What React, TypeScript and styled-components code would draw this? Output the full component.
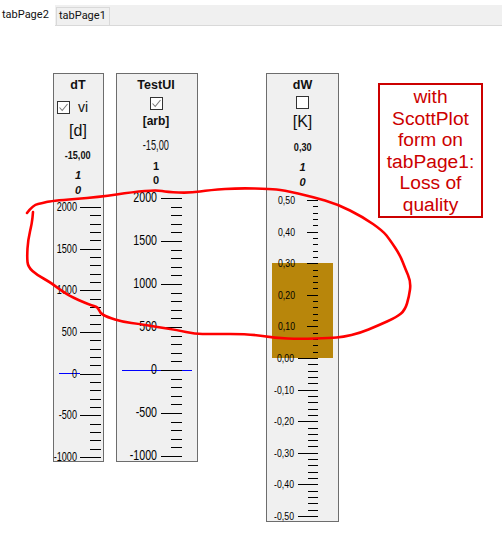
import React from 'react'
import styled, { createGlobalStyle } from 'styled-components'

const GlobalStyle = createGlobalStyle`
  html, body {
    margin: 0;
    padding: 0;
    background: #ffffff;
    font-family: "Liberation Sans", Arial, sans-serif;
  }
`

const Page = styled.div`
  position: relative;
  width: 502px;
  height: 539px;
  overflow: hidden;
`

const TabStrip = styled.div`
  display: flex;
  align-items: flex-end;
  padding-top: 5px;
  background: linear-gradient(#ffffff 5px, #f0f0f0 5px);
  height: 20px;
  border-bottom: 1px solid #d9d9d9;
`

const Tab = styled.div<{ $active?: boolean }>`
  box-sizing: border-box;
  height: ${p => (p.$active ? '21px' : '18px')};
  width: ${p => (p.$active ? '55px' : '54px')};
  margin-left: ${p => (p.$active ? '0' : '1px')};
  margin-bottom: ${p => (p.$active ? '-1px' : '0')};
  padding-left: 2px;
  background: ${p => (p.$active ? '#ffffff' : '#f0f0f0')};
  border: ${p => (p.$active ? 'none' : '1px solid #d9d9d9')};
  border-bottom: none;
  font-family: Roboto, "Liberation Sans", sans-serif;
  font-size: 11px;
  line-height: ${p => (p.$active ? '19px' : '16px')};
  color: #111111;
`

const Main = styled.div`
  display: flex;
  align-items: flex-start;
  padding: 47px 0 0 53px;
`

const Panel = styled.div<{ $width: number; $height: number; $gap?: number; $nudge?: number }>`
  box-sizing: border-box;
  width: ${p => p.$width}px;
  height: ${p => p.$height}px;
  margin-left: ${p => p.$gap ?? 0}px;
  padding-right: ${p => p.$nudge ?? 0}px;
  display: flex;
  flex-direction: column;
  background: #f0f0f0;
  border: 1px solid #6d6d6d;
`

const Row = styled.div<{ $h: number }>`
  height: ${p => p.$h}px;
  flex: none;
  display: flex;
  align-items: center;
  justify-content: center;
  color: #111111;
`

const Title = styled(Row)`
  font-size: 12.5px;
  font-weight: 700;
`

const Unit = styled(Row)`
  font-size: 16px;
`

const BoldUnit = styled(Row)`
  font-size: 12px;
  font-weight: 700;
`

const Value = styled(Row)`
  font-size: 11px;
  font-weight: 700;
`

const ThinValue = styled(Row)`
  font-size: 14px;
`

// the original labels are a tall, condensed face
const Squeezed = styled.span<{ $x: number }>`
  display: block;
  transform: scaleX(${p => p.$x});
`

const Digit = styled(Row)<{ $italic?: boolean }>`
  font-size: 11px;
  font-weight: 700;
  font-style: ${p => (p.$italic ? 'italic' : 'normal')};
`

const CheckRow = styled(Row)`
  justify-content: flex-start;
  padding-left: 3px;
  gap: 8px;
  font-size: 14px;
`

const Box = styled.span`
  box-sizing: border-box;
  width: 13px;
  height: 13px;
  display: block;
  background: #ffffff;
  border: 1px solid #333333;
`

const Ruler = styled.svg`
  display: block;
  flex: none;
  overflow: visible;
`

const Note = styled.div`
  box-sizing: border-box;
  width: 105px;
  height: 135px;
  margin: 10px 0 0 39px;
  padding-top: 1px;
  border: 2px solid #cc0000;
  color: #cc0000;
  background: #ffffff;
  font-size: 19.2px;
  line-height: 21.5px;
  text-align: center;
`

const Scribble = styled.svg`
  position: absolute;
  left: 0;
  top: 0;
  pointer-events: none;
`

const Check = ({ checked }: { checked?: boolean }) => (
  <Box>
    {checked && (
      <svg width="11" height="11" viewBox="0 0 11 11" style={{ display: 'block' }}>
        <polyline points="1.5,5.5 4.2,8.5 9.5,2" fill="none" stroke="#7a7a7a" strokeWidth="1.1" />
      </svg>
    )}
  </Box>
)

type Geometry = { major: number; minor: number; end: number; label: number }

type ScaleProps = {
  box: [number, number, number, number]
  first: number
  step: number
  labels: string[]
  geo: Geometry
  upper?: Geometry
  fontSize: number
  children?: React.ReactNode
  over?: React.ReactNode
}

// ticks and labels are given in page pixels, viewBox maps them into the panel
const Scale = ({ box, first, step, labels, geo, upper, fontSize, children, over }: ScaleProps) => {
  const zeroIndex = labels.findIndex(l => /^0(,00)?$/.test(l))
  const ticks: React.ReactNode[] = []
  const count = (labels.length - 1) * 5
  for (let i = 0; i <= count; i++) {
    const y = Math.round(first + (i * step) / 5) + 0.5
    const isMajor = i % 5 === 0
    const g = upper && i < zeroIndex * 5 ? upper : geo
    ticks.push(
      <line
        key={i}
        x1={isMajor ? g.major : g.minor}
        x2={g.end}
        y1={y}
        y2={y}
        stroke="#000000"
        strokeWidth="1"
      />
    )
  }
  return (
    <Ruler width={box[2]} height={box[3]} viewBox={box.join(' ')}>
      {children}
      <g shapeRendering="crispEdges">{ticks}</g>
      {over}
      <g fontSize={fontSize} fill="#000000" textAnchor="end">
        {labels.map((l, i) => {
          const g = upper && i < zeroIndex ? upper : geo
          const y = Math.round(first + i * step) + 4
          return (
            <text key={l} transform={`translate(${g.label} ${y}) scale(0.76 1)`}>
              {l}
            </text>
          )
        })}
      </g>
    </Ruler>
  )
}

const Blue = ({ x1, x2, y }: { x1: number; x2: number; y: number }) => (
  <line x1={x1} x2={x2} y1={y} y2={y} stroke="#0000ff" strokeWidth="1" shapeRendering="crispEdges" />
)

const thousands = ['2000', '1500', '1000', '500', '0', '-500', '-1000']
const fractions = [
  '0,50', '0,40', '0,30', '0,20', '0,10', '0,00',
  '-0,10', '-0,20', '-0,30', '-0,40', '-0,50',
]

const points = [
  [27, 213], [33, 205], [43, 203], [50, 201], [100, 197], [133, 192], [157, 190], [167, 192],
  [190, 193], [210, 190], [240, 188], [270, 189], [283, 190], [313, 197], [337, 204], [363, 217],
  [383, 231], [390, 240], [400, 255], [405, 268], [411, 282], [409, 297], [405, 310], [397, 317],
  [377, 326], [360, 333], [343, 337], [330, 338], [300, 339], [275, 338], [250, 334], [210, 334],
  [195, 334], [177, 330], [157, 327], [140, 324], [123, 322], [107, 317], [100, 313], [98, 307],
  [90, 305], [67, 295], [50, 282], [37, 275], [28, 267], [27, 257], [28, 240], [32, 223], [33, 212],
]

// hand drawn line: run a quadratic through the midpoints so it has no corners
const scribble = points.reduce((d, [x, y], i) => {
  if (i === 0) return `M${x} ${y}`
  if (i === points.length - 1) return `${d} L${x} ${y}`
  const [nx, ny] = points[i + 1]
  return `${d} Q${x} ${y} ${(x + nx) / 2} ${(y + ny) / 2}`
}, '')

export default function App() {
  return (
    <Page>
      <GlobalStyle />
      <TabStrip>
        <Tab $active>tabPage2</Tab>
        <Tab>tabPage1</Tab>
      </TabStrip>
      <Main>
        <Panel $width={51} $height={389} $nudge={1}>
          <Title $h={22}>dT</Title>
          <CheckRow $h={22}>
            <Check checked />
            <span>vi</span>
          </CheckRow>
          <Unit $h={26}>[d]</Unit>
          <Value $h={22}>
            <Squeezed $x={0.83}>-15,00</Squeezed>
          </Value>
          <Digit $h={18} $italic>1</Digit>
          <Digit $h={12} $italic>0</Digit>
          <Scale
            box={[54, 196, 49, 265]}
            first={207}
            step={41.67}
            labels={thousands}
            geo={{ major: 80, minor: 90, end: 101, label: 77 }}
            fontSize={12}
            over={<Blue x1={59} x2={80} y={373.5} />}
          />
        </Panel>
        <Panel $width={82} $height={389} $gap={12} $nudge={2}>
          <Title $h={22}>TestUI</Title>
          <Row $h={14}>
            <Check checked />
          </Row>
          <BoldUnit $h={22}>[arb]</BoldUnit>
          <ThinValue $h={26}>
            <Squeezed $x={0.66}>-15,00</Squeezed>
          </ThinValue>
          <Digit $h={16}>1</Digit>
          <Digit $h={12}>0</Digit>
          <Scale
            box={[117, 186, 80, 275]}
            first={198}
            step={43}
            labels={thousands}
            geo={{ major: 161, minor: 171, end: 182, label: 157 }}
            fontSize={14}
            over={
              <>
                <Blue x1={122} x2={161} y={370.5} />
                <Blue x1={182} x2={192} y={370.5} />
              </>
            }
          />
        </Panel>
        <Panel $width={73} $height={449} $gap={68}>
          <Title $h={22}>dW</Title>
          <Row $h={13}>
            <Check />
          </Row>
          <Unit $h={26}>[K]</Unit>
          <Value $h={24}>
            <Squeezed $x={0.83}>0,30</Squeezed>
          </Value>
          <Digit $h={16} $italic>1</Digit>
          <Digit $h={14} $italic>0</Digit>
          <Scale
            box={[267, 189, 71, 332]}
            first={200}
            step={31.6}
            labels={fractions}
            geo={{ major: 298, minor: 308, end: 318, label: 294 }}
            upper={{ major: 307, minor: 313, end: 318, label: 295 }}
            fontSize={11.5}
          >
            <rect x={272} y={263} width={61} height={95} fill="#b8860b" />
          </Scale>
        </Panel>
        <Note>
          with
          <br />
          ScottPlot
          <br />
          form on
          <br />
          tabPage1:
          <br />
          Loss of
          <br />
          quality
        </Note>
      </Main>
      <Scribble width="502" height="539" viewBox="0 0 502 539">
        <path d={scribble} fill="none" stroke="#ff0000" strokeWidth="2.6" strokeLinejoin="round" strokeLinecap="round" />
      </Scribble>
    </Page>
  )
}
